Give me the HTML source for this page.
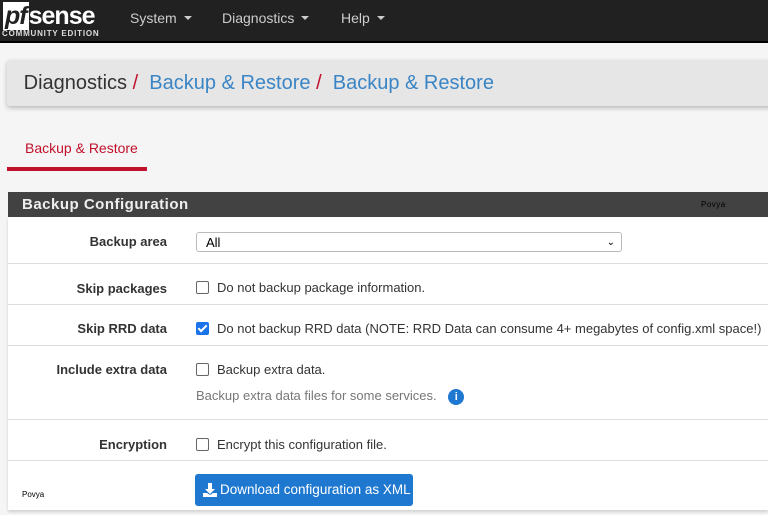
<!DOCTYPE html><html><head><style>
html,body{margin:0;width:768px;height:515px;overflow:hidden}
body{background:#f5f5f5;font-family:"Liberation Sans",sans-serif;position:relative}
.nav{position:absolute;left:0;top:0;width:768px;height:41px;background:#212121;border-bottom:2px solid #000}
.logo{position:absolute;left:3px;top:2px;color:#fff;font-weight:bold;font-size:25px;letter-spacing:-1px}
.logo small{position:absolute;left:-1px;top:27px;font-size:8px;letter-spacing:.8px;white-space:nowrap;color:#ddd}
.nv{position:absolute;top:10px;color:#ccc;font-size:14px}
.nv:after{content:"";display:inline-block;margin-left:7px;border:4px solid transparent;border-top-color:#ccc;border-bottom:0;vertical-align:3px}
.bc{position:absolute;left:7px;top:60px;width:770px;height:46px;background:#e6e6e6;box-shadow:0 2px 5px rgba(0,0,0,.25);border-radius:3px;font-size:20px;line-height:46px;color:#333;white-space:nowrap}
.bc b{font-weight:normal;color:#c0102a}.bc a{color:#3a85c5}
.tab{position:absolute;left:25px;top:140px;color:#c0102a;font-size:14px}
.tabl{position:absolute;left:7px;top:167px;width:140px;height:4px;background:#c0102a}
.ph{position:absolute;left:8px;top:192px;width:760px;height:25px;background:#424242;color:#eee;font-weight:bold;font-size:15px;line-height:25px;padding-left:14px;letter-spacing:.5px;box-sizing:border-box}
.pb{position:absolute;left:8px;top:217px;width:760px;height:293px;background:#fff;box-shadow:0 2px 3px rgba(0,0,0,.15)}
.row{position:absolute;left:0;width:760px;border-bottom:1px solid #ddd}
.lb{position:absolute;right:601px;font-weight:bold;font-size:13px;color:#333;white-space:nowrap}
.v{position:absolute;left:188px;font-size:13px;color:#333;white-space:nowrap}
.cb{display:inline-block;width:11px;height:11px;border:1px solid #666;border-radius:2px;vertical-align:-2px;margin-right:8px}
.ck{background:#1a73e8;border-color:#1a73e8;position:relative}
.ck:after{content:"";position:absolute;left:3px;top:0;width:3px;height:7px;border:solid #fff;border-width:0 2px 2px 0;transform:rotate(45deg)}
.sel{position:absolute;left:188px;top:15px;width:426px;height:20px;border:1px solid #bbb;border-radius:3px;font-size:13px;line-height:20px;padding-left:9px;box-sizing:border-box}
.btn{position:absolute;left:187px;top:257px;width:218px;height:32px;background:#1e78d0;border-radius:3px;color:#fff;font-size:13.5px;line-height:32px;white-space:nowrap}
.btn svg{position:absolute;left:7px;top:8px}
</style></head><body>
<div class="nav"><div class="logo"><i style="font-style:italic;background:#fff;color:#212121;padding:0 2px">pf</i>sense<small>COMMUNITY EDITION</small></div>
<span class="nv" style="left:130px">System</span><span class="nv" style="left:222px">Diagnostics</span><span class="nv" style="left:341px">Help</span></div>
<div class="bc">&nbsp;&nbsp;&nbsp;Diagnostics <b>/</b>&nbsp; <a>Backup &amp; Restore</a> <b>/</b>&nbsp; <a>Backup &amp; Restore</a></div>
<div class="tab">Backup &amp; Restore</div><div class="tabl"></div>
<div class="ph">Backup Configuration<span style="position:absolute;left:693px;font-size:8px;color:#000;font-weight:normal">Povya</span></div>
<div class="pb">
<div class="row" style="top:0;height:46px"><span class="lb" style="top:17px">Backup area</span><div class="sel">All<span style="position:absolute;right:6px;font-size:10px">&#8964;</span></div></div>
<div class="row" style="top:47px;height:40px"><span class="lb" style="top:17px">Skip packages</span><span class="v" style="top:16px"><span class="cb"></span>Do not backup package information.</span></div>
<div class="row" style="top:88px;height:40px"><span class="lb" style="top:16px">Skip RRD data</span><span class="v" style="top:16px"><span class="cb ck"></span>Do not backup RRD data (NOTE: RRD Data can consume 4+ megabytes of config.xml space!)</span></div>
<div class="row" style="top:129px;height:73px"><span class="lb" style="top:16px">Include extra data</span><span class="v" style="top:16px"><span class="cb"></span>Backup extra data.</span><span class="v" style="top:42px;color:#777">Backup extra data files for some services. <span style="display:inline-block;width:16px;height:16px;border-radius:50%;background:#1e78d0;color:#fff;font-size:11px;font-weight:bold;text-align:center;line-height:16px;margin-left:8px">i</span></span></div>
<div class="row" style="top:203px;height:40px"><span class="lb" style="top:17px">Encryption</span><span class="v" style="top:17px"><span class="cb"></span>Encrypt this configuration file.</span></div>
<span style="position:absolute;left:14px;top:273px;font-size:8px">Povya</span>
<div class="btn"><svg width="16" height="16" viewBox="0 0 16 16"><path d="M6 1h4v6h3l-5 5-5-5h3z" fill="#fff"/><path d="M1 11h4l3 2 3-2h4v4H1z" fill="#fff"/></svg><span style="position:absolute;left:25px">Download configuration as XML</span></div>
</div>
</body></html>
